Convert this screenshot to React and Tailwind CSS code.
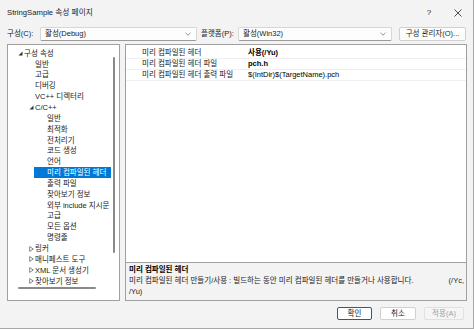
import React from 'react';

const font = { fontFamily: '"Liberation Sans", "Noto Sans CJK KR", sans-serif' };

const treeItems = [
  { label: '구성 속성', level: 0, arrow: 'open' },
  { label: '일반', level: 1 },
  { label: '고급', level: 1 },
  { label: '디버깅', level: 1 },
  { label: 'VC++ 디렉터리', level: 1 },
  { label: 'C/C++', level: 1, arrow: 'open' },
  { label: '일반', level: 2 },
  { label: '최적화', level: 2 },
  { label: '전처리기', level: 2 },
  { label: '코드 생성', level: 2 },
  { label: '언어', level: 2 },
  { label: '미리 컴파일된 헤더', level: 2, selected: true },
  { label: '출력 파일', level: 2 },
  { label: '찾아보기 정보', level: 2 },
  { label: '외부 include 지시문', level: 2 },
  { label: '고급', level: 2 },
  { label: '모든 옵션', level: 2 },
  { label: '명령줄', level: 2 },
  { label: '링커', level: 1, arrow: 'closed' },
  { label: '매니페스트 도구', level: 1, arrow: 'closed' },
  { label: 'XML 문서 생성기', level: 1, arrow: 'closed' },
  { label: '찾아보기 정보', level: 1, arrow: 'closed' },
];

const indent = { 0: 'pl-[10px]', 1: 'pl-[21px]', 2: 'pl-[33px]' };

const props = [
  { name: '미리 컴파일된 헤더', value: '사용(/Yu)', bold: true },
  { name: '미리 컴파일된 헤더 파일', value: 'pch.h', bold: true },
  { name: '미리 컴파일된 헤더 출력 파일', value: '$(IntDir)$(TargetName).pch' },
];

function Arrow({ type }) {
  if (type === 'open') {
    return (
      <svg width="5" height="5" viewBox="0 0 5 5" className="block">
        <polygon points="4.5,0.5 4.5,4.5 0.5,4.5" fill="#333" />
      </svg>
    );
  }
  if (type === 'closed') {
    return (
      <svg width="5" height="6" viewBox="0 0 5 6" className="block">
        <polygon points="0.7,0.6 4.3,3 0.7,5.4" fill="none" stroke="#666" strokeWidth="0.8" />
      </svg>
    );
  }
  return null;
}

function Chevron() {
  return (
    <svg width="6" height="4" viewBox="0 0 6 4" className="block">
      <path d="M0.5 0.8 L3 3.2 L5.5 0.8" fill="none" stroke="#777" strokeWidth="0.8" />
    </svg>
  );
}

function Combo({ text, width }) {
  return (
    <div className={`${width} h-[14px] flex items-center justify-between pl-[4px] pr-[5px] bg-[#fdfdfd] border border-[#d6d6d6] border-b-[#9a9a9a] rounded-[2px]`}>
      <span>{text}</span>
      <Chevron />
    </div>
  );
}

export default function App() {
  return (
    <div style={font} className="w-[474px] h-[329px] bg-[#f3f3f3] text-[7.5px] text-[#1a1a1a] flex flex-col border-b border-r border-[#a8a8a8] overflow-hidden">
      {/* Title bar */}
      <div className="h-[25px] flex items-center pl-[7px] pr-[10px]">
        <span className="flex-1 text-[7.7px]">StringSample 속성 페이지</span>
        <span className="w-[10px] text-center mr-[20px] text-[8px]">?</span>
        <svg width="8" height="8" viewBox="0 0 8 8" className="block mr-[1px]">
          <path d="M0.5 0.5 L7.5 7.5 M7.5 0.5 L0.5 7.5" stroke="#222" strokeWidth="0.8" />
        </svg>
      </div>

      {/* Config row */}
      <div className="mt-[2px] h-[14px] flex items-center pl-[7px]">
        <span className="w-[33px]">구성(C):</span>
        <Combo text="활성(Debug)" width="w-[157px]" />
        <span className="w-[41px] pl-[4px]">플랫폼(P):</span>
        <Combo text="활성(Win32)" width="w-[154px]" />
        <div className="ml-[7px] w-[67px] h-[14px] flex items-center justify-center bg-[#fdfdfd] border border-[#d0d0d0] rounded-[2px]">
          구성 관리자(O)...
        </div>
      </div>

      {/* Main */}
      <div className="mt-[3px] flex pl-[7px] gap-[5px] h-[257px]">
        {/* Tree */}
        <div className="relative w-[113px] h-full bg-white border border-[#a0a0a0] overflow-hidden">
          <div className="pt-[3px]">
            {treeItems.map((item, i) => (
              <div key={i} className="h-[10.85px] w-[103px] overflow-hidden whitespace-nowrap">
                {item.selected ? (
                  <div className="ml-[26px] h-full bg-[#0078d7] text-white flex items-center pl-[13px]">
                    {item.label}
                  </div>
                ) : (
                  <div className={`${indent[item.level]} h-full flex items-center`}>
                    <span className="w-[6px] flex items-center">
                      <Arrow type={item.arrow} />
                    </span>
                    <span>{item.label}</span>
                  </div>
                )}
              </div>
            ))}
          </div>
          {/* scrollbars */}
          <div className="absolute left-[105px] top-[12px] w-[2px] h-[196px] bg-[#8a8a8a] rounded-full" />
          <div className="absolute left-[10px] top-[242px] w-[78px] h-[2px] bg-[#8a8a8a] rounded-full" />
        </div>

        {/* Right column */}
        <div className="w-[342px] h-full flex flex-col border border-[#a0a0a0]">
          <div className="flex-1 bg-white pt-[3px]">
            {props.map((p, i) => (
              <div key={i} className="h-[10.85px] flex items-center border-b border-[#f0f0f0] whitespace-nowrap">
                <span className="w-[122px] pl-[16px]">{p.name}</span>
                <span className={p.bold ? 'font-bold text-black' : 'text-black'}>{p.value}</span>
              </div>
            ))}
          </div>
          <div className="h-[38px] border-t border-[#a0a0a0] bg-[#f3f3f3] pl-[3px] pr-[2px] pt-[2px] leading-[10.85px]">
            <div className="font-bold text-black">미리 컴파일된 헤더</div>
            <div className="flex justify-between whitespace-nowrap">
              <span>미리 컴파일된 헤더 만들기/사용 : 빌드하는 동안 미리 컴파일된 헤더를 만들거나 사용합니다.</span>
              <span>(/Yc,</span>
            </div>
            <div>/Yu)</div>
          </div>
        </div>
      </div>

      {/* Buttons */}
      <div className="mt-[6px] flex justify-end gap-[8px] pr-[9px]">
        <div className="w-[35px] h-[13px] flex items-center justify-center bg-white border border-[#0067c0] rounded-[2px]">확인</div>
        <div className="w-[36px] h-[13px] flex items-center justify-center bg-white border border-[#d0d0d0] rounded-[2px]">취소</div>
        <div className="w-[40px] h-[13px] flex items-center justify-center bg-[#f5f5f5] border border-[#e0e0e0] text-[#a0a0a0] rounded-[2px]">적용(A)</div>
      </div>
    </div>
  );
}
